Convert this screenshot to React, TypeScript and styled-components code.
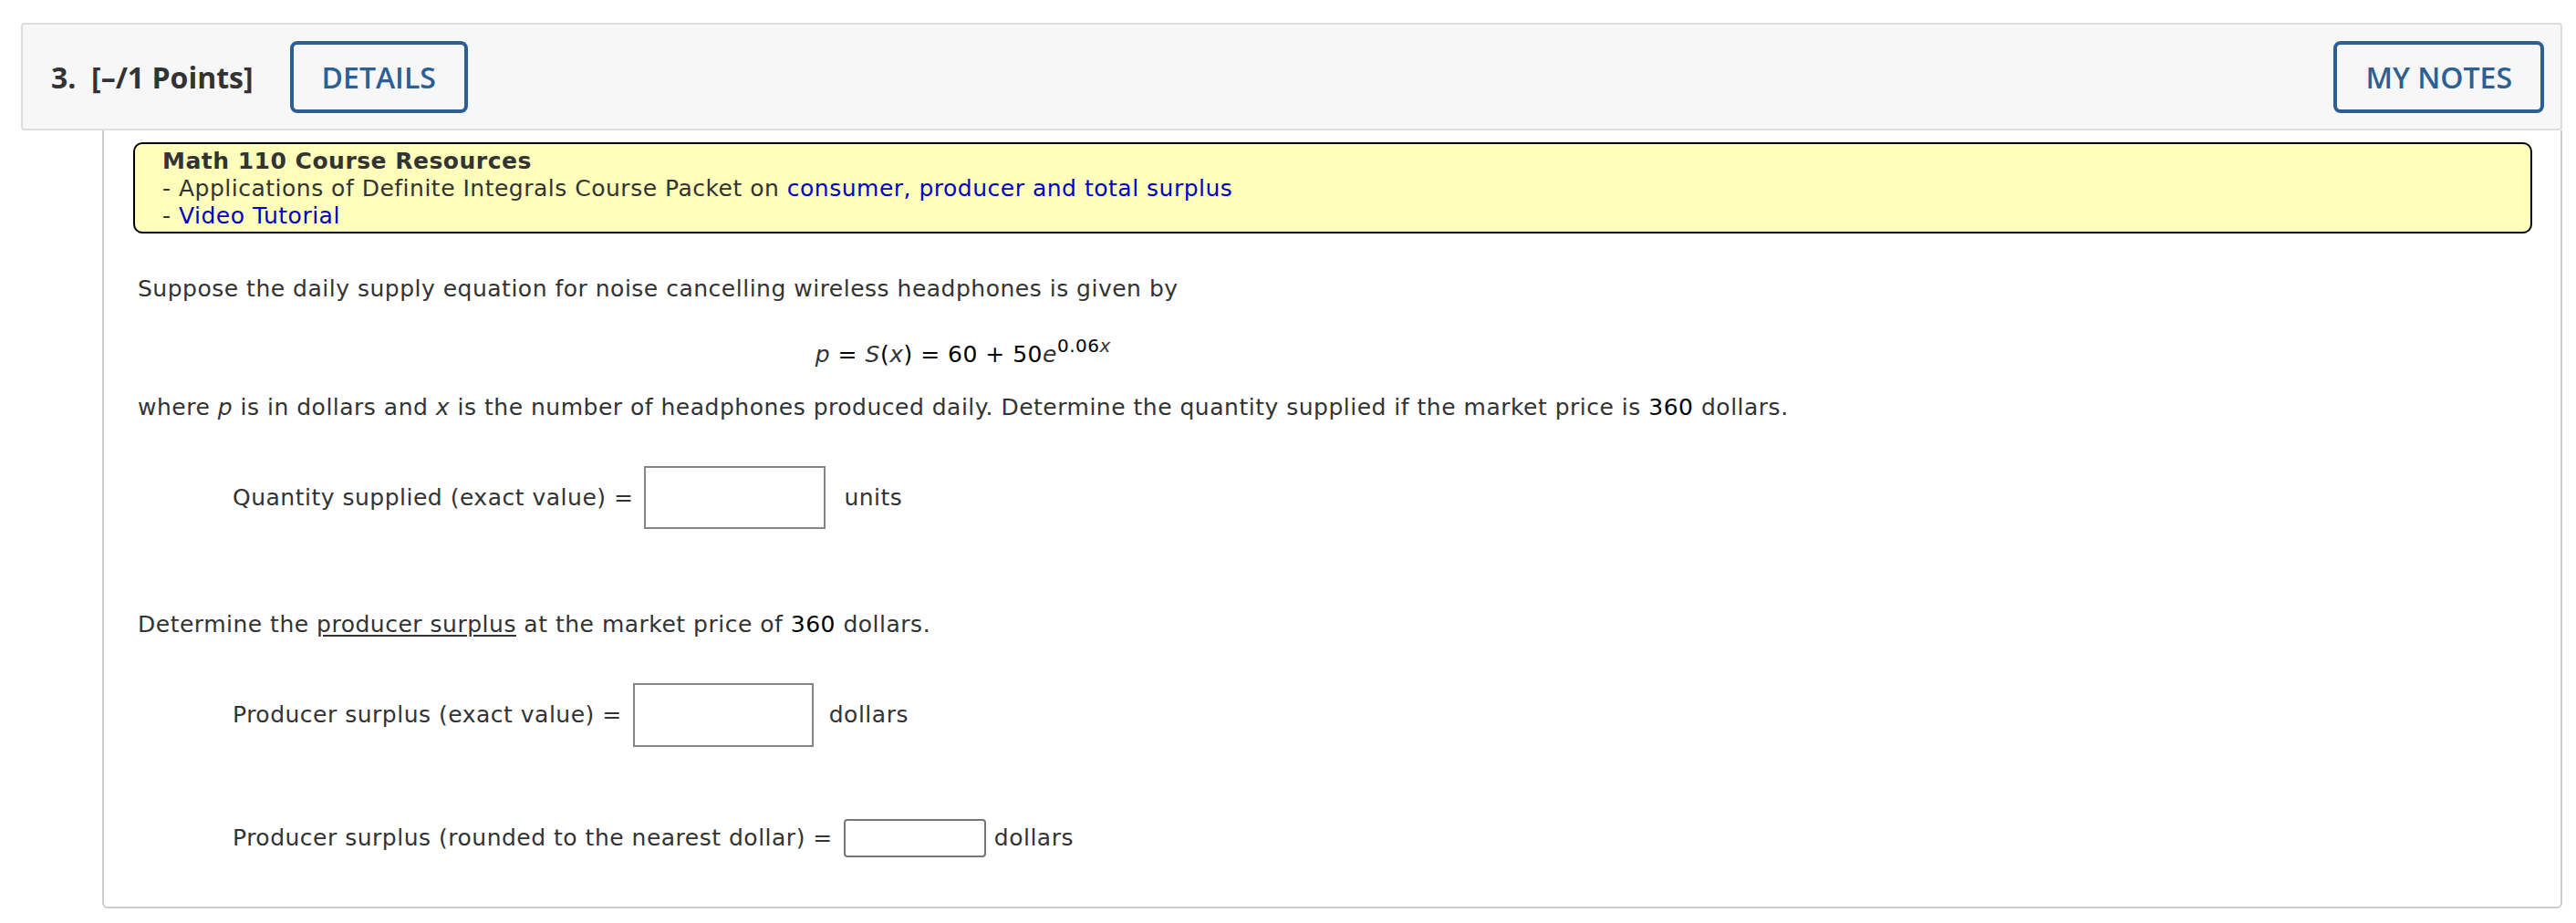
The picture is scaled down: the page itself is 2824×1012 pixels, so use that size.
import React from "react";
import styled, { createGlobalStyle } from "styled-components";

const GlobalStyle = createGlobalStyle`
  html, body {
    margin: 0;
    padding: 0;
    background: #ffffff;
  }
  body {
    font-family: "DejaVu Sans", Verdana, sans-serif;
    color: #333333;
  }
`;

const Page = styled.div`
  padding: 25px 15px 16px 23px;
`;

const Header = styled.div`
  display: flex;
  align-items: center;
  height: 118px;
  box-sizing: border-box;
  padding: 0 18px 0 31px;
  background: #f7f7f7;
  border: 2px solid #dddddd;
  border-radius: 4px;
`;

const Title = styled.h2`
  margin: 0 40px 0 0;
  font-family: "Open Sans", sans-serif;
  font-weight: 700;
  font-size: 32px;
  color: #333333;
  white-space: pre;
`;

const OutlineButton = styled.button`
  height: 79px;
  box-sizing: border-box;
  padding: 0 31px;
  border: 4px solid #2c5f93;
  border-radius: 8px;
  background: transparent;
  color: #2c5f93;
  font-family: "Open Sans", sans-serif;
  font-size: 32px;
  font-weight: 600;
  cursor: pointer;
`;

const Spacer = styled.div`
  flex: 1;
`;

const Body = styled.div`
  margin-left: 89px;
  border: 2px solid #cccccc;
  border-top: none;
  border-radius: 0 0 6px 6px;
  padding: 13px 31px 54px 32px;
  font-size: 25px;
  letter-spacing: 0.5px;
  line-height: 30px;
`;

const Resources = styled.div`
  background: #ffffbb;
  border: 2px solid #000000;
  border-radius: 10px;
  padding: 4px 31px 2px 30px;
  color: #333333;
`;

const ResourcesTitle = styled.div`
  font-weight: 700;
`;

const Link = styled.a`
  color: #0000c8;
  text-decoration: none;
`;

const Prompt = styled.div`
  display: flow-root;
  width: fit-content;
  margin-left: 5px;
`;

const Paragraph = styled.p<{ $top: number }>`
  margin: ${(p) => p.$top}px 0 0;
`;

const Equation = styled.p`
  margin: 42px 0 0;
  text-align: center;
  color: #000000;
`;

const Var = styled.i`
  color: #333333;
`;

const Sup = styled.sup`
  font-size: 20px;
  line-height: 0;
  vertical-align: 11px;
`;

const Num = styled.span`
  color: #000000;
`;

const Term = styled.span`
  text-decoration: underline;
  text-decoration-thickness: 2px;
  text-underline-offset: 3px;
`;

const AnswerRow = styled.div<{ $top: number }>`
  display: flex;
  align-items: center;
  margin-top: ${(p) => p.$top}px;
  padding-left: 104px;
`;

const AnswerBox = styled.input<{ $w: number; $h: number; $round?: boolean }>`
  width: ${(p) => p.$w}px;
  height: ${(p) => p.$h}px;
  box-sizing: border-box;
  margin: 0 0 0 12px;
  padding: 0 8px;
  border: 2px solid ${(p) => (p.$round ? "#767676" : "#858585")};
  border-radius: ${(p) => (p.$round ? "4px" : "0")};
  background: #ffffff;
  font: inherit;
  outline: none;
`;

const Unit = styled.span<{ $gap: number }>`
  margin-left: ${(p) => p.$gap}px;
`;

export default function App() {
  return (
    <>
      <GlobalStyle />
      <Page>
        <Header>
          <Title>{"3.  [–/1 Points]"}</Title>
          <OutlineButton>DETAILS</OutlineButton>
          <Spacer />
          <OutlineButton>MY NOTES</OutlineButton>
        </Header>
        <Body>
          <Resources>
            <ResourcesTitle>Math 110 Course Resources</ResourcesTitle>
            <div>
              - Applications of Definite Integrals Course Packet on{" "}
              <Link href="#">consumer, producer and total surplus</Link>
            </div>
            <div>
              - <Link href="#">Video Tutorial</Link>
            </div>
          </Resources>
          <Prompt>
            <Paragraph $top={46}>
              Suppose the daily supply equation for noise cancelling wireless
              headphones is given by
            </Paragraph>
            <Equation>
              <Var>p</Var> = <Var>S</Var>(<Var>x</Var>) = 60 + 50<Var>e</Var>
              <Sup>
                0.06<Var>x</Var>
              </Sup>
            </Equation>
            <Paragraph $top={28}>
              where <Var>p</Var> is in dollars and <Var>x</Var> is the number of
              headphones produced daily. Determine the quantity supplied if the
              market price is <Num>360</Num> dollars.
            </Paragraph>
            <AnswerRow $top={49}>
              <span>Quantity supplied (exact value) =</span>
              <AnswerBox $w={199} $h={69} />
              <Unit $gap={20}>units</Unit>
            </AnswerRow>
            <Paragraph $top={90}>
              Determine the <Term>producer surplus</Term> at the market price of{" "}
              <Num>360</Num> dollars.
            </Paragraph>
            <AnswerRow $top={49}>
              <span>Producer surplus (exact value) =</span>
              <AnswerBox $w={198} $h={70} />
              <Unit $gap={17}>dollars</Unit>
            </AnswerRow>
            <AnswerRow $top={79}>
              <span>Producer surplus (rounded to the nearest dollar) =</span>
              <AnswerBox $w={156} $h={42} $round />
              <Unit $gap={9}>dollars</Unit>
            </AnswerRow>
          </Prompt>
        </Body>
      </Page>
    </>
  );
}
